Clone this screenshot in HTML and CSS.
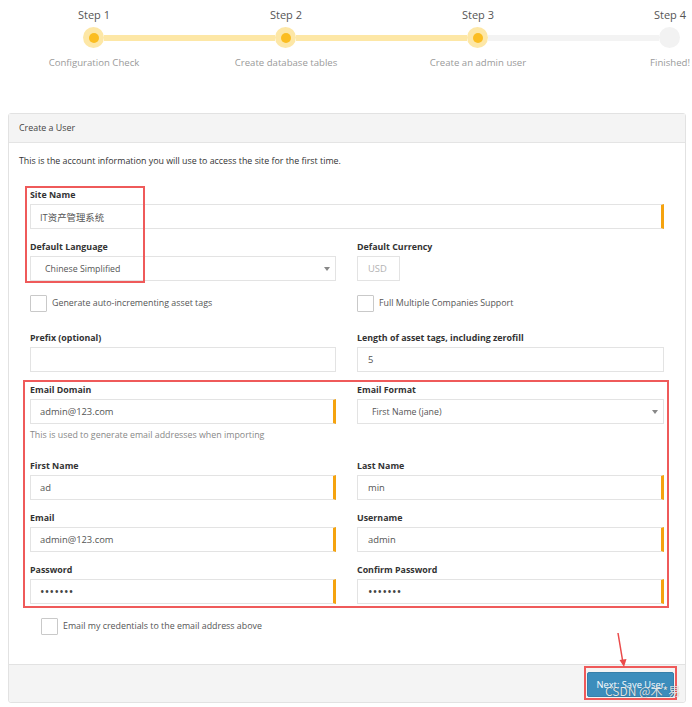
FILE: index.html
```html
<!DOCTYPE html>
<html lang="en">
<head>
<meta charset="utf-8">
<title>Create a User</title>
<link rel="stylesheet" href="styles.css">
</head>
<body>
<div class="wizard">
  <div class="step-titles"><span>Step 1</span><span>Step 2</span><span>Step 3</span><span>Step 4</span></div>
  <div class="track">
    <span class="dot done"></span><span class="seg done"></span>
    <span class="dot done"></span><span class="seg done"></span>
    <span class="dot done"></span><span class="seg"></span>
    <span class="dot"></span>
  </div>
  <div class="step-subs"><span>Configuration Check</span><span>Create database tables</span><span>Create an admin user</span><span>Finished!</span></div>
</div>

<div class="panel">
  <div class="panel-head">Create a User</div>
  <div class="panel-body">
    <p class="intro">This is the account information you will use to access the site for the first time.</p>
    <div class="form">
      <div class="group">
        <label class="lbl">Site Name</label>
        <input class="ctl req" type="text" value="IT资产管理系统">
      </div>
      <div class="row">
        <div class="group">
          <label class="lbl">Default Language</label>
          <div class="sel"><select class="ctl pick"><option>Chinese Simplified</option></select></div>
        </div>
        <div class="group">
          <label class="lbl">Default Currency</label>
          <input class="ctl cur" type="text" placeholder="USD">
        </div>
      </div>
      <div class="row checks">
        <label class="chk"><input class="box" type="checkbox"> Generate auto-incrementing asset tags</label>
        <label class="chk"><input class="box" type="checkbox"> Full Multiple Companies Support</label>
      </div>
      <div class="row">
        <div class="group">
          <label class="lbl">Prefix (optional)</label>
          <input class="ctl" type="text" value="">
        </div>
        <div class="group">
          <label class="lbl">Length of asset tags, including zerofill</label>
          <input class="ctl" type="text" value="5">
        </div>
      </div>
      <div class="row">
        <div class="group has-help">
          <label class="lbl">Email Domain</label>
          <input class="ctl req" type="text" value="admin@123.com">
          <p class="help">This is used to generate email addresses when importing</p>
        </div>
        <div class="group">
          <label class="lbl">Email Format</label>
          <div class="sel"><select class="ctl pick"><option>First Name (jane)</option></select></div>
        </div>
      </div>
      <div class="row">
        <div class="group">
          <label class="lbl">First Name</label>
          <input class="ctl req" type="text" value="ad">
        </div>
        <div class="group">
          <label class="lbl">Last Name</label>
          <input class="ctl req" type="text" value="min">
        </div>
      </div>
      <div class="row">
        <div class="group">
          <label class="lbl">Email</label>
          <input class="ctl req" type="text" value="admin@123.com">
        </div>
        <div class="group">
          <label class="lbl">Username</label>
          <input class="ctl req" type="text" value="admin">
        </div>
      </div>
      <div class="row">
        <div class="group">
          <label class="lbl">Password</label>
          <input class="ctl req pw" type="password" value="1234567">
        </div>
        <div class="group">
          <label class="lbl">Confirm Password</label>
          <input class="ctl req pw" type="password" value="1234567">
        </div>
      </div>
      <label class="chk cred"><input class="box" type="checkbox"> Email my credentials to the email address above</label>
    </div>
  </div>
  <div class="panel-foot">
    <button class="btn" type="button">Next: Save User</button>
  </div>
</div>

<div class="annot a1"></div>
<div class="annot a2"></div>
<div class="annot a3"></div>
<svg class="arrow" width="24" height="40" viewBox="0 0 24 40">
  <line x1="8" y1="3" x2="13" y2="33" stroke="#ea4a4a" stroke-width="1.5"/>
  <polygon points="9.5,30 16.5,29 14,37" fill="#ea4a4a"/>
</svg>
<div class="wm">CSDN @木*易</div>
</body>
</html>
```
FILE: styles.css
```css
* { box-sizing: border-box; }
html, body { margin: 0; padding: 0; }
body {
  width: 692px;
  height: 707px;
  overflow: hidden;
  position: relative;
  background: #fff;
  color: #333;
  font-family: "Open Sans", "Noto Sans", "Noto Sans CJK SC", sans-serif;
}

/* wizard */
.wizard { padding-top: 7px; }
.step-titles, .step-subs {
  display: grid;
  grid-template-columns: repeat(4, 192px);
  margin-left: -2px;
  width: 768px;
  text-align: center;
}
.step-titles { font-size: 11px; line-height: 16px; color: #555; }
.track {
  display: flex;
  align-items: center;
  height: 21px;
  margin-top: 4px;
  padding-left: 83px;
}
.dot {
  flex: none;
  width: 21px;
  height: 21px;
  border-radius: 50%;
  background: #f2f2f2;
  display: flex;
  align-items: center;
  justify-content: center;
}
.dot.done { background: #fde7a6; }
.dot.done::after {
  content: "";
  width: 10px;
  height: 10px;
  border-radius: 50%;
  background: #fbbd21;
}
.seg { flex: none; width: 171px; height: 6px; background: #f3f3f3; }
.seg.done { background: #fde7a6; }
.step-subs { margin-top: 8px; font-size: 9.6px; line-height: 14px; color: #9a9a9a; }

/* panel */
.panel {
  margin: 43px 6px 0 8px;
  border: 1px solid #e2e2e2;
  border-radius: 3px;
  background: #fff;
}
.panel-head {
  height: 29px;
  padding: 0 10px;
  background: #f4f4f4;
  border-bottom: 1px solid #e4e4e4;
  font-size: 8.9px;
  line-height: 28px;
  color: #444;
}
.panel-body { padding: 11px 21px 29px 10px; }
.intro { margin: 0; font-size: 8.85px; line-height: 14px; color: #333; }
.form { margin: 20px 0 0 11px; }
.row {
  display: grid;
  grid-template-columns: 306px 307px;
  column-gap: 21px;
}
.group { margin-bottom: 11px; }
.group.has-help { margin-bottom: 17px; }
.lbl {
  display: block;
  margin-bottom: 2px;
  font-size: 8.85px;
  line-height: 14px;
  font-weight: 700;
  color: #333;
}
.ctl {
  display: block;
  width: 100%;
  height: 25px;
  margin: 0;
  padding: 0 9px;
  border: 1px solid #e3e3e3;
  border-radius: 0;
  background: #fff;
  font-family: inherit;
  font-size: 9.4px;
  color: #555;
  outline: none;
}
.row .group:nth-child(2) .ctl { padding-left: 10px; }
.req { border-right: 3px solid #f5a30f; }
.pw { font-size: 12px; letter-spacing: 0.3px; color: #444; }
.cur { width: 43px; padding: 0 9px; }
.cur::placeholder { color: #b3b3b3; }
.sel { position: relative; }
.pick { appearance: none; -webkit-appearance: none; padding-left: 14px; font-size: 8.8px; }
.row .group:nth-child(2) .pick { padding-left: 14px; }
.sel::after {
  content: "";
  position: absolute;
  right: 6px;
  top: 11px;
  border-left: 3px solid transparent;
  border-right: 3px solid transparent;
  border-top: 4px solid #888;
}
.help { margin: 4px 0 0; font-size: 8.85px; line-height: 14px; color: #888; }

.checks { padding-top: 3px; margin-bottom: 19px; }
.chk {
  display: flex;
  align-items: center;
  gap: 5px;
  font-size: 8.85px;
  line-height: 17px;
  color: #555;
}
.box {
  -webkit-appearance: none;
  appearance: none;
  flex: none;
  width: 17px;
  height: 17px;
  margin: 0;
  border: 1px solid #c9c9c9;
  border-radius: 1px;
  background: #fff;
}
.cred { margin-top: 3px; padding-left: 11px; }

.panel-foot {
  height: 38px;
  padding: 7px 11px 0;
  display: flex;
  justify-content: flex-end;
  align-items: flex-start;
  background: #f4f4f4;
  border-top: 1px solid #e2e2e2;
  border-radius: 0 0 3px 3px;
}
.btn {
  width: 87px;
  height: 25px;
  padding: 0;
  background: #3c8dbc;
  border: 1px solid #367fa9;
  border-radius: 2px;
  color: #fff;
  font-family: inherit;
  font-size: 9.3px;
}

/* screenshot annotations */
.annot { position: absolute; border: 2px solid #ef5a5a; pointer-events: none; }
.a1 { left: 25px; top: 186px; width: 120px; height: 97px; }
.a2 { left: 23px; top: 380px; width: 646px; height: 228px; }
.a3 { left: 584px; top: 666px; width: 93px; height: 34px; }
.arrow { position: absolute; left: 610px; top: 630px; }
.wm {
  position: absolute;
  left: 605px;
  top: 683px;
  font-family: "Noto Sans CJK SC", sans-serif;
  font-size: 12px;
  line-height: 16px;
  color: rgba(255, 255, 255, 0.85);
  text-shadow: 0 0 1px rgba(0, 0, 0, 0.45);
  pointer-events: none;
}
```
